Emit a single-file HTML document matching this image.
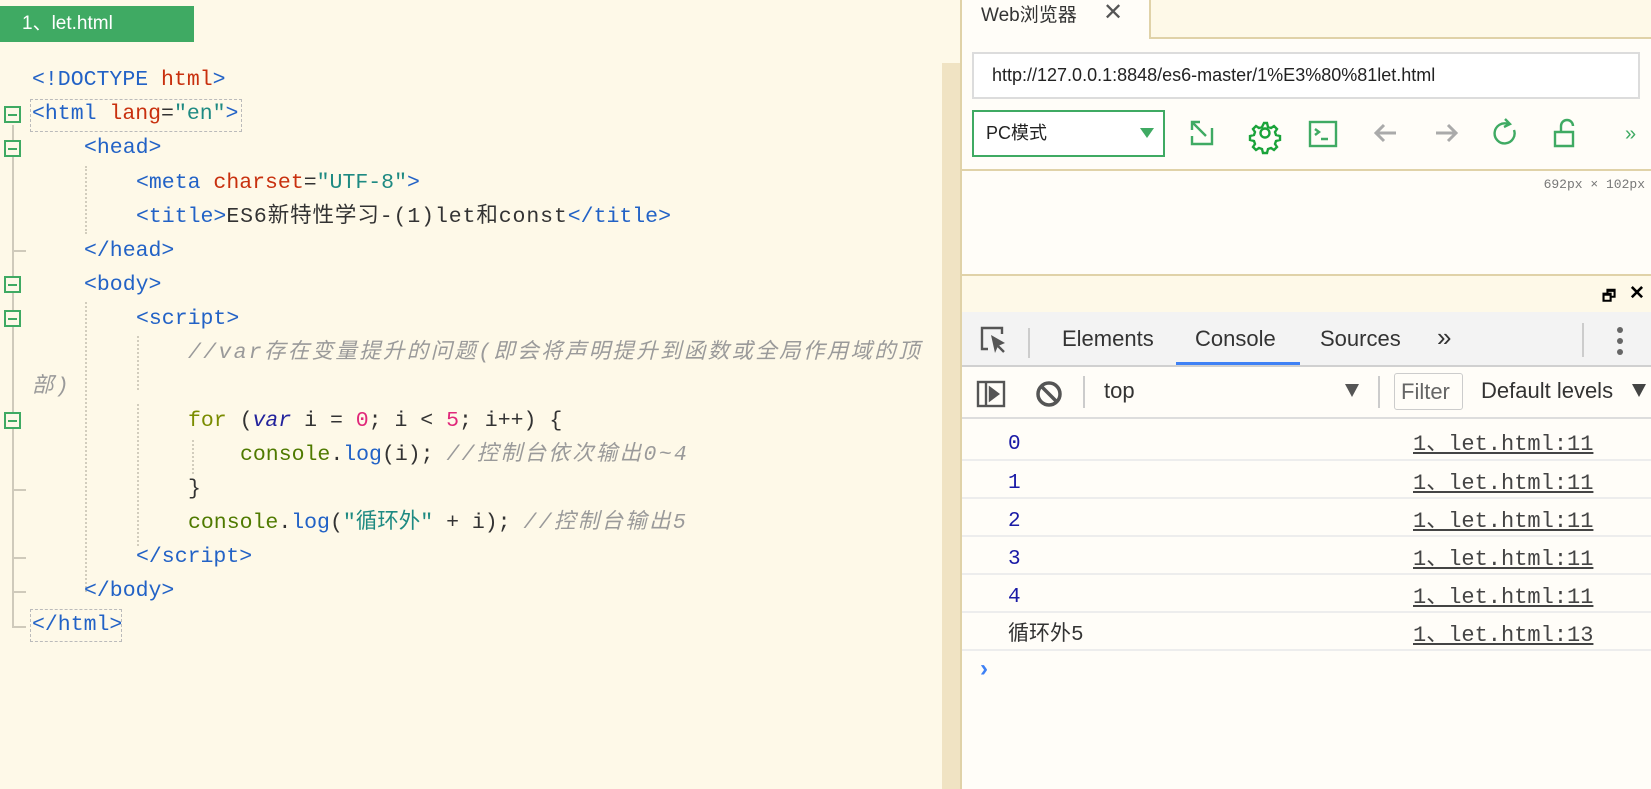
<!DOCTYPE html>
<html><head><meta charset="utf-8"><style>
*{margin:0;padding:0;box-sizing:border-box}
body{width:1651px;height:789px;overflow:hidden;background:#fef9e8;position:relative;font-family:"Liberation Sans","Noto Sans CJK SC",sans-serif}
.a{position:absolute}
.code{font-family:"Liberation Mono","Noto Sans CJK SC",monospace;font-size:21.5px;white-space:pre;line-height:34px;height:34px;color:#333}
.t{color:#2262c6}.at{color:#c8300e}.s{color:#1e8a82}.c{color:#9a9a9a;font-style:italic;letter-spacing:2.3px}
.k{color:#7a8c00}.v{color:#23239c;font-style:italic}.n{color:#e0287a}.cs{color:#4f7a00}
.fold{position:absolute;left:4px;width:17px;height:17px;border:2px solid #3faa63;background:#fef9e8}
.fold:after{content:"";position:absolute;left:2px;right:2px;top:5.5px;height:2px;background:#3faa63}
.tick{position:absolute;left:12px;width:14px;height:2px;background:#cfcabb}
.dg{position:absolute;border-left:2px dotted #d2cdbd;width:0}
.mono{font-family:"Liberation Mono","Noto Sans CJK SC",monospace}
.row{position:absolute;left:962px;right:0;height:38px;border-bottom:2px solid #ededed}
.row span{position:absolute;top:5px;height:36px;line-height:36px}
.row .l{left:46px;font-size:21px;color:#1a1aa6}
.row .r{left:451px;font-size:22px;color:#444;text-decoration:underline}
</style></head><body>
<div class="a" style="left:0;top:6px;width:194px;height:36px;background:#3faa63;color:#fff;font-size:19px;line-height:36px;padding-left:22px">1、let.html</div>

<div class="a" style="left:12px;top:125px;width:2px;height:503px;background:#cfcabb"></div>
<div class="tick" style="top:250px"></div><div class="tick" style="top:489px"></div><div class="tick" style="top:557px"></div><div class="tick" style="top:591px"></div><div class="tick" style="top:626px"></div>
<div class="fold" style="top:106px"></div><div class="fold" style="top:140px"></div><div class="fold" style="top:276px"></div><div class="fold" style="top:310px"></div><div class="fold" style="top:412px"></div>
<div class="dg" style="left:85px;top:166px;height:68px"></div>
<div class="dg" style="left:85px;top:302px;height:290px"></div>
<div class="dg" style="left:137px;top:336px;height:54px"></div>
<div class="dg" style="left:137px;top:404px;height:142px"></div>
<div class="dg" style="left:192px;top:440px;height:34px"></div>
<div class="a" style="left:30px;top:99px;width:212px;height:33px;border:1px dashed #bbb"></div>
<div class="a" style="left:30px;top:609px;width:92px;height:33px;border:1px dashed #bbb"></div>

<div class="a code" style="left:32px;top:63px"><span class="t">&lt;!DOCTYPE </span><span class="at">html</span><span class="t">&gt;</span></div>
<div class="a code" style="left:32px;top:97px"><span class="t">&lt;html </span><span class="at">lang</span>=<span class="s">"en"</span><span class="t">&gt;</span></div>
<div class="a code" style="left:84px;top:131px"><span class="t">&lt;head&gt;</span></div>
<div class="a code" style="left:136px;top:166px"><span class="t">&lt;meta </span><span class="at">charset</span>=<span class="s">"UTF-8"</span><span class="t">&gt;</span></div>
<div class="a code" style="left:136px;top:200px"><span class="t">&lt;title&gt;</span><span style="letter-spacing:0.9px">ES6新特性学习-(1)let和const</span><span class="t">&lt;/title&gt;</span></div>
<div class="a code" style="left:84px;top:234px"><span class="t">&lt;/head&gt;</span></div>
<div class="a code" style="left:84px;top:268px"><span class="t">&lt;body&gt;</span></div>
<div class="a code" style="left:136px;top:302px"><span class="t">&lt;script&gt;</span></div>
<div class="a code" style="left:188px;top:336px"><span class="c">//var存在变量提升的问题(即会将声明提升到函数或全局作用域的顶</span></div>
<div class="a code" style="left:32px;top:370px"><span class="c">部)</span></div>
<div class="a code" style="left:188px;top:404px"><span class="k">for</span> (<span class="v">var</span> i = <span class="n">0</span>; i &lt; <span class="n">5</span>; i++) {</div>
<div class="a code" style="left:240px;top:438px"><span class="cs">console</span>.<span class="t">log</span>(i); <span class="c">//控制台依次输出0~4</span></div>
<div class="a code" style="left:188px;top:472px">}</div>
<div class="a code" style="left:188px;top:506px"><span class="cs">console</span>.<span class="t">log</span>(<span class="s">"循环外"</span> + i); <span class="c">//控制台输出5</span></div>
<div class="a code" style="left:136px;top:540px"><span class="t">&lt;/script&gt;</span></div>
<div class="a code" style="left:84px;top:574px"><span class="t">&lt;/body&gt;</span></div>
<div class="a code" style="left:32px;top:608px"><span class="t">&lt;/html&gt;</span></div>

<div class="a" style="left:942px;top:63px;width:18px;height:726px;background:#f0e3c3"></div>
<div class="a" style="left:960px;top:0;width:691px;height:789px;background:#fffdf8;border-left:2px solid #e0d2a8"></div>
<div class="a" style="left:1149px;top:0;width:502px;height:39px;background:#fef9e8;border-left:2px solid #e0d2a8;border-bottom:2px solid #e0d2a8"></div>
<div class="a" style="left:981px;top:0px;font-size:19px;color:#333">Web浏览器</div>
<div class="a" style="left:1103px;top:-2px;font-size:24px;color:#555">✕</div>
<div class="a" style="left:972px;top:52px;width:668px;height:47px;border:2px solid #dcdcdc;background:#fff;font-size:18px;line-height:43px;padding-left:18px;color:#222">http://127.0.0.1:8848/es6-master/1%E3%80%81let.html</div>
<div class="a" style="left:972px;top:110px;width:193px;height:47px;border:2px solid #3faa63;background:#fff;font-size:18px;line-height:43px;padding-left:12px;color:#222">PC模式</div>
<div class="a" style="left:1140px;top:128px;width:0;height:0;border-left:7px solid transparent;border-right:7px solid transparent;border-top:10px solid #3faa63"></div>
<svg class="a" style="left:1180px;top:110px" width="470" height="46" fill="none" stroke-width="2.4">
<g stroke="#3faa63"><path d="M20 12h-8v8M12 12l14 14M16 34h16V18M12 26v8h4" /></g>
<g stroke="#1aa33a"><path d="M84 13l3 0 1 4 3 1 3-2 3 3-2 3 1 3 4 1v4l-4 1-1 3 2 3-3 3-3-2-3 1-1 4h-4l-1-4-3-1-3 2-3-3 2-3-1-3-4-1v-4l4-1 1-3-2-3 3-3 3 2 3-1z"/><circle cx="85" cy="23" r="4.5"/></g>
<g stroke="#3faa63"><rect x="130" y="12" width="26" height="24"/><path d="M135 19l4 3-4 3M141 29h7"/></g>
<g stroke="#aaa" stroke-width="3"><path d="M216 23h-20M204 15l-8 8 8 8M256 23h20M268 15l8 8-8 8"/></g>
<g stroke="#3faa63"><path d="M328 14a10 10 0 1 0 6 6M325 9l5 5-6 3"/><path d="M381 22v-6a6 6 0 0 1 12 0M375 22h18v14h-18z"/></g>
<text x="445" y="30" fill="#3faa63" font-size="20" font-family="Liberation Sans">»</text>
</svg>
<div class="a" style="left:962px;top:169px;width:689px;height:2px;background:#e0d2a8"></div>
<div class="a mono" style="right:6px;top:177px;font-size:13px;color:#777">692px × 102px</div>
<div class="a" style="left:962px;top:274px;width:689px;height:38px;background:#fef9e8;border-top:2px solid #e0d2a8"></div>
<div class="a" style="left:1602px;top:286px;font-size:15px;font-weight:bold;color:#000">🗗</div>
<div class="a" style="left:1629px;top:282px;font-size:19px;font-weight:bold;color:#000">✕</div>
<div class="a" style="left:962px;top:312px;width:689px;height:55px;background:#f3f3f3;border-bottom:2px solid #d0d0d0"></div>
<svg class="a" style="left:979px;top:325px" width="32" height="32" fill="none" stroke="#555" stroke-width="2.4"><path d="M9 24H3V3h20v6"/><path d="M12 10l4 18 3-7 7-3z" fill="#555" stroke="none"/><path d="M19 21l6 6"/></svg>
<div class="a" style="left:1028px;top:328px;width:2px;height:30px;background:#ccc"></div>
<div class="a" style="left:1062px;top:326px;font-size:22px;color:#333">Elements</div>
<div class="a" style="left:1195px;top:326px;font-size:22px;color:#333">Console</div>
<div class="a" style="left:1176px;top:362px;width:124px;height:3px;background:#3f81f5"></div>
<div class="a" style="left:1320px;top:326px;font-size:22px;color:#333">Sources</div>
<div class="a" style="left:1437px;top:322px;font-size:26px;color:#333">»</div>
<div class="a" style="left:1582px;top:323px;width:2px;height:34px;background:#ccc"></div>
<div class="a" style="left:1617px;top:327px;width:6px;height:6px;border-radius:3px;background:#666;box-shadow:0 11px 0 #666,0 22px 0 #666"></div>
<svg class="a" style="left:976px;top:380px" width="100" height="28" fill="none" stroke="#555" stroke-width="2.4"><rect x="2" y="2" width="26" height="24"/><path d="M10 2v24"/><path d="M14 8l8 6-8 6z" fill="#555"/><circle cx="73" cy="14" r="11" stroke-width="3.5"/><path d="M65 6l16 16" stroke-width="3.5"/></svg>
<div class="a" style="left:1083px;top:376px;width:2px;height:32px;background:#ccc"></div>
<div class="a" style="left:1104px;top:378px;font-size:22px;color:#333">top</div>
<div class="a" style="left:1345px;top:384px;width:0;height:0;border-left:7px solid transparent;border-right:7px solid transparent;border-top:13px solid #555"></div>
<div class="a" style="left:1378px;top:376px;width:2px;height:32px;background:#ccc"></div>
<div class="a" style="left:1394px;top:373px;width:69px;height:37px;border:1px solid #ccc;border-radius:3px;font-size:22px;line-height:35px;padding-left:6px;color:#666">Filter</div>
<div class="a" style="left:1481px;top:378px;font-size:22px;color:#333">Default levels</div>
<div class="a" style="left:1632px;top:384px;width:0;height:0;border-left:7px solid transparent;border-right:7px solid transparent;border-top:13px solid #444"></div>
<div class="a" style="left:962px;top:417px;width:689px;height:2px;background:#ddd"></div>
<div class="row mono" style="top:421px;height:40px"><span class="l" style="top:6px">0</span><span class="r" style="top:6px">1、let.html:11</span></div>
<div class="row mono" style="top:461px"><span class="l">1</span><span class="r">1、let.html:11</span></div>
<div class="row mono" style="top:499px"><span class="l">2</span><span class="r">1、let.html:11</span></div>
<div class="row mono" style="top:537px"><span class="l">3</span><span class="r">1、let.html:11</span></div>
<div class="row mono" style="top:575px"><span class="l">4</span><span class="r">1、let.html:11</span></div>
<div class="row mono" style="top:613px"><span class="l" style="color:#333">循环外5</span><span class="r">1、let.html:13</span></div>
<div class="a" style="left:980px;top:655px;font-size:24px;font-weight:bold;color:#3f81f5">›</div>
</body></html>
